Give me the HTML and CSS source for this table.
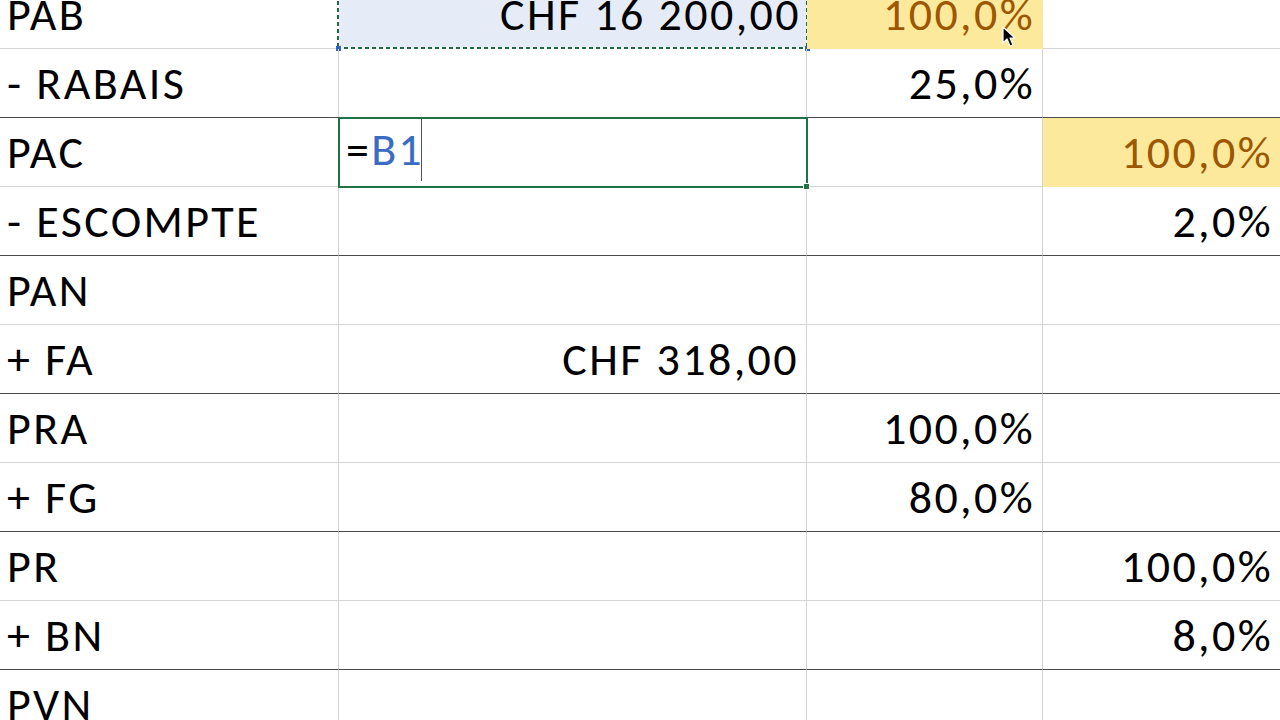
FILE: index.html
```html
<!DOCTYPE html>
<html lang="fr">
<head>
<meta charset="utf-8">
<title>Feuille</title>
<link rel="stylesheet" href="styles.css">
</head>
<body>
<div class="sheet">
  <div class="row">
    <div class="cell label">PAB</div>
    <div class="cell num ref">CHF 16 200,00
      <span class="knob kbl"></span><span class="knob kbr"></span>
    </div>
    <div class="cell num neutral">100,0%
      <svg class="pointer" width="16" height="22" viewBox="0 0 16 22"><path d="M1 1 L1 17 L5 13 L8 20 L11 19 L8 12 L13 12 Z" fill="#000" stroke="#fff" stroke-width="1.2" stroke-linejoin="round"/></svg>
    </div>
    <div class="cell num"></div>
  </div>
  <div class="row group-end">
    <div class="cell label">- RABAIS</div>
    <div class="cell num"></div>
    <div class="cell num">25,0%</div>
    <div class="cell num"></div>
  </div>
  <div class="row">
    <div class="cell label">PAC</div>
    <div class="cell active"><span class="eq">=</span><span class="refname">B1</span><span class="caret"></span><span class="fill-handle"></span></div>
    <div class="cell num"></div>
    <div class="cell num neutral">100,0%</div>
  </div>
  <div class="row group-end">
    <div class="cell label">- ESCOMPTE</div>
    <div class="cell num"></div>
    <div class="cell num"></div>
    <div class="cell num">2,0%</div>
  </div>
  <div class="row">
    <div class="cell label">PAN</div>
    <div class="cell num"></div>
    <div class="cell num"></div>
    <div class="cell num"></div>
  </div>
  <div class="row group-end">
    <div class="cell label">+ FA</div>
    <div class="cell num">CHF 318,00</div>
    <div class="cell num"></div>
    <div class="cell num"></div>
  </div>
  <div class="row">
    <div class="cell label">PRA</div>
    <div class="cell num"></div>
    <div class="cell num">100,0%</div>
    <div class="cell num"></div>
  </div>
  <div class="row group-end">
    <div class="cell label">+ FG</div>
    <div class="cell num"></div>
    <div class="cell num">80,0%</div>
    <div class="cell num"></div>
  </div>
  <div class="row">
    <div class="cell label">PR</div>
    <div class="cell num"></div>
    <div class="cell num"></div>
    <div class="cell num">100,0%</div>
  </div>
  <div class="row group-end">
    <div class="cell label">+ BN</div>
    <div class="cell num"></div>
    <div class="cell num"></div>
    <div class="cell num">8,0%</div>
  </div>
  <div class="row">
    <div class="cell label">PVN</div>
    <div class="cell num"></div>
    <div class="cell num"></div>
    <div class="cell num"></div>
  </div>
</div>
</body>
</html>
```

FILE: styles.css
```css
html, body {
  margin: 0;
  padding: 0;
  background: #fff;
  overflow: hidden;
  height: 720px;
}
.sheet {
  margin-top: -20px;
  width: 1280px;
  font-family: "Carlito", "Lato", "Liberation Sans", sans-serif;
  font-size: 46px;
  letter-spacing: 2.4px;
  color: #000;
}
.row {
  display: grid;
  grid-template-columns: 339px 468px 236px 237px;
  height: 69px;
}
.cell {
  position: relative;
  box-sizing: border-box;
  height: 69px;
  border-right: 1px solid #d4d4d4;
  border-bottom: 1px solid #d4d4d4;
  display: flex;
  align-items: flex-end;
  line-height: 1;
  padding: 0 7px 11px 7px;
  white-space: nowrap;
}
.cell:last-child { border-right: none; }
.group-end .cell { border-bottom: 1px solid #4a4a4a; }
.num { justify-content: flex-end; }
.label { justify-content: flex-start; }
.neutral {
  background: #fce99c;
  color: #9c5700;
  border-right-color: #fce99c;
  border-bottom-color: #fce99c;
}
.ref {
  border: none;
  padding-bottom: 12px;
  margin-left: -2px;
  margin-right: -1px;
  background-image:
    repeating-linear-gradient(90deg, #1f6b40 0 4px, #ffffff 4px 7px),
    repeating-linear-gradient(180deg, #1f6b40 0 4px, #ffffff 4px 7px),
    repeating-linear-gradient(180deg, #1f6b40 0 4px, #ffffff 4px 7px);
  background-size: 100% 2px, 2px 100%, 2px 100%;
  background-position: 0 100%, 0 0, 100% 0;
  background-repeat: no-repeat;
  background-color: #e6ecf7;
}
.knob {
  position: absolute;
  width: 5px;
  height: 5px;
  background: #2f63c6;
  bottom: -2px;
}
.kbl { left: -1px; }
.kbr { right: -2px; }
.pointer {
  position: absolute;
  left: 195px;
  top: 46px;
}
.active {
  border: 2px solid #217346;
  margin: -1px;
  height: 71px;
  padding: 0 8px 14px 6px;
  justify-content: flex-start;
  z-index: 2;
}
.eq { color: #000; }
.refname { color: #3b6cc4; letter-spacing: 2px; }
.caret {
  display: inline-block;
  width: 1px;
  height: 62px;
  background: #555;
  margin-left: -3px;
  margin-bottom: -9px;
}
.fill-handle {
  position: absolute;
  right: -4px;
  bottom: -4px;
  width: 5px;
  height: 5px;
  background: #217346;
  border: 1px solid #fff;
}
```
